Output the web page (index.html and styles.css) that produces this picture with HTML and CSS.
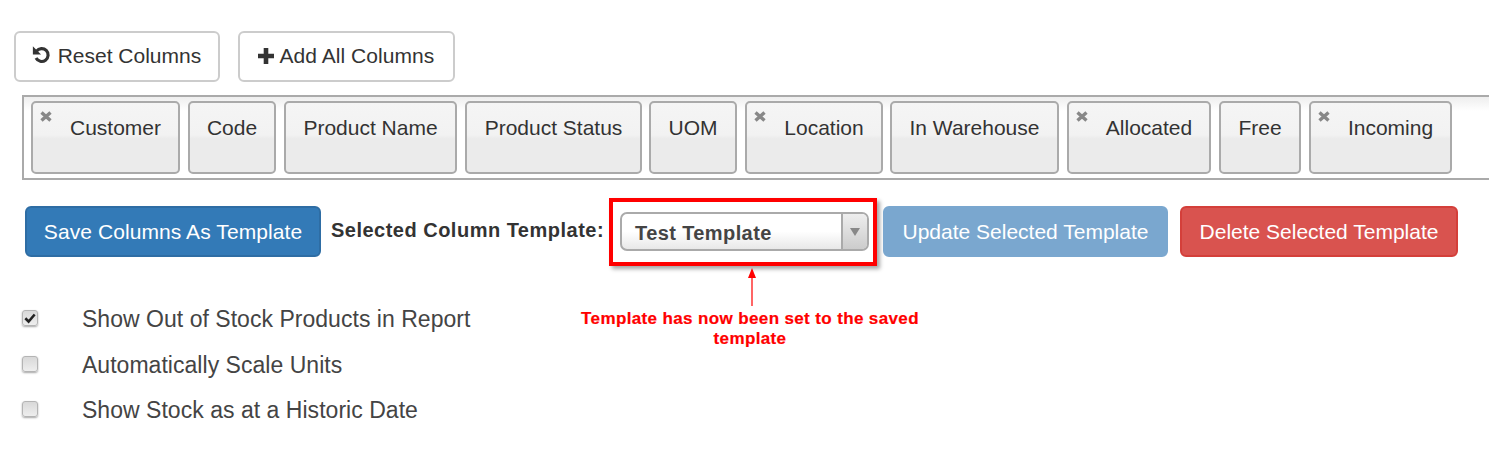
FILE: index.html
```html
<!DOCTYPE html>
<html lang="en">
<head>
<meta charset="utf-8">
<title>Columns</title>
<link rel="stylesheet" href="styles.css">
</head>
<body>
<div class="toolbar">
  <button class="btn btn-default btn-reset"><svg class="ic ic-undo" viewBox="0 0 18 18"><path d="M4.3 5.8A6.1 6.1 0 1 1 3.8 12.4" fill="none" stroke="#333" stroke-width="3"/><path d="M0.8 1.2V9H8.6Z" fill="#333"/></svg> Reset Columns</button>
  <button class="btn btn-default btn-add"><svg class="ic ic-plus" viewBox="0 0 16 16"><path d="M5.7 0H10.3V5.7H16V10.3H10.3V16H5.7V10.3H0V5.7H5.7Z" fill="#333"/></svg> Add All Columns</button>
</div>
<div class="tray">
  <div class="col w149 has-x"><svg class="x" viewBox="0 0 12 11"><path d="M1.5 1.5L10.5 9.5M10.5 1.5L1.5 9.5" stroke="#888" stroke-width="3.4"/></svg><span class="t">Customer</span></div>
  <div class="col w88"><span class="t">Code</span></div>
  <div class="col w173"><span class="t">Product Name</span></div>
  <div class="col w177"><span class="t">Product Status</span></div>
  <div class="col w88b"><span class="t">UOM</span></div>
  <div class="col w138 has-x"><svg class="x" viewBox="0 0 12 11"><path d="M1.5 1.5L10.5 9.5M10.5 1.5L1.5 9.5" stroke="#888" stroke-width="3.4"/></svg><span class="t">Location</span></div>
  <div class="col w169"><span class="t">In Warehouse</span></div>
  <div class="col w144 has-x"><svg class="x" viewBox="0 0 12 11"><path d="M1.5 1.5L10.5 9.5M10.5 1.5L1.5 9.5" stroke="#888" stroke-width="3.4"/></svg><span class="t">Allocated</span></div>
  <div class="col w82"><span class="t">Free</span></div>
  <div class="col w143 has-x"><svg class="x" viewBox="0 0 12 11"><path d="M1.5 1.5L10.5 9.5M10.5 1.5L1.5 9.5" stroke="#888" stroke-width="3.4"/></svg><span class="t">Incoming</span></div>
</div>
<div class="actions">
  <button class="btn btn-primary btn-save">Save Columns As Template</button>
  <label class="sel-label">Selected Column Template:</label>
  <div class="highlight">
    <div class="select"><span class="sel-text">Test Template</span><span class="sel-arrow"><i></i></span></div>
  </div>
  <button class="btn btn-primary btn-update">Update Selected Template</button>
  <button class="btn btn-danger btn-delete">Delete Selected Template</button>
  <div class="note">
    <svg class="note-arrow" viewBox="0 0 10 38"><path d="M5 0L9 10H5.6V38H4.4V10H1Z" fill="#f00"/></svg>
    <p>Template has now been set to the saved template</p>
  </div>
</div>
<div class="checks">
  <div class="check"><span class="box"><svg viewBox="0 0 12 12"><path d="M2 6.2L4.8 9L10 3" fill="none" stroke="#222" stroke-width="2.2"/></svg></span><span>Show Out of Stock Products in Report</span></div>
  <div class="check"><span class="box"></span><span>Automatically Scale Units</span></div>
  <div class="check"><span class="box"></span><span>Show Stock as at a Historic Date</span></div>
</div>
</body>
</html>
```
FILE: styles.css
```css
* { box-sizing: border-box; }
html, body { margin: 0; padding: 0; }
body {
  width: 1489px;
  height: 454px;
  overflow: hidden;
  background: #fff;
  font-family: "Liberation Sans", Arial, sans-serif;
  color: #333;
}
.btn {
  font-family: inherit;
  font-size: 21px;
  height: 51px;
  padding: 0;
  border-radius: 6px;
  border: 2px solid transparent;
  white-space: nowrap;
  display: block;
}
.btn-default { background: #fff; border-color: #ccc; color: #333; padding-bottom: 2px; }
.btn-primary { background: #337ab7; border-color: #2e6da4; color: #fff; letter-spacing: .08px; }
.btn-danger { background: #d9534f; border-color: #d43f3a; color: #fff; }

.toolbar { display: flex; padding: 31px 0 0 14px; gap: 18px; }
.btn-reset { width: 206px; }
.btn-add { width: 217px; letter-spacing: .04px; }
.ic { display: inline-block; vertical-align: -1px; }
.ic-undo { width: 19px; height: 19px; margin-left: -1px; margin-right: 1px; }
.ic-plus { width: 16px; height: 16px; margin-left: -1px; margin-right: 1px; }

.tray {
  display: flex;
  margin: 13px 0 0 22px;
  height: 85px;
  padding: 4px 0 4px 7px;
  border: 2px solid #aaa;
  border-right: 0;
  background: linear-gradient(#eee, #fff 14px);
}
.col {
  position: relative;
  height: 73px;
  margin-right: 8px;
  border: 2px solid #aaa;
  border-radius: 5px;
  background: linear-gradient(#f5f5f5, #f2f2f2 46%, #ebebeb 52%);
  font-size: 21px;
  text-align: center;
  padding-top: 13px;
  line-height: 24px;
  color: #333;
}
.has-x { padding-left: 20px; }
.x {
  position: absolute;
  left: 7px;
  top: 8px;
  width: 12px;
  height: 11px;
}
.w149 { width: 149px; }
.w88 { width: 88px; }
.w173 { width: 173px; }
.w177 { width: 177px; margin-right: 7px; }
.w88b { width: 88px; }
.w138 { width: 138px; margin-right: 7px; }
.w169 { width: 169px; }
.w144 { width: 144px; }
.w82 { width: 82px; }
.w143 { width: 143px; }

.actions {
  position: relative;
  display: flex;
  align-items: flex-start;
  margin-top: 18px;
  padding-left: 25px;
  height: 68px;
}
.actions > .btn { margin-top: 8px; }
.btn-save { width: 296px; }
.sel-label {
  margin-left: 10px;
  margin-top: 20px;
  font-weight: bold;
  font-size: 20px;
  line-height: 24px;
  letter-spacing: .49px;
  width: 278px;
  white-space: nowrap;
}
.highlight {
  width: 268px;
  height: 68px;
  border: 4px solid #f00;
  box-shadow: 3px 3px 4px rgba(0,0,0,.35);
  padding: 10px 4px 0 7px;
}
.select {
  display: flex;
  height: 39px;
  width: 249px;
  border: 2px solid #aaa;
  border-radius: 7px;
  background: linear-gradient(#fff 50%, #e8e8e8);
  overflow: hidden;
}
.sel-text {
  flex: 1;
  font-size: 20px;
  font-weight: bold;
  color: #444;
  padding-left: 13px;
  line-height: 38px;
  letter-spacing: .4px;
}
.sel-arrow {
  width: 26px;
  border-left: 2px solid #aaa;
  background: linear-gradient(#eee, #ccc);
  display: flex;
  align-items: center;
  justify-content: center;
}
.sel-arrow i {
  border-left: 5px solid transparent;
  border-right: 5px solid transparent;
  border-top: 8px solid #888;
}
.actions > .btn-update { width: 285px; margin-left: 6px; background: #7aa7cf; border-color: #7aa7cf; letter-spacing: 0; }
.actions > .btn-delete { width: 278px; margin-left: 12px; }
.note {
  position: absolute;
  left: 570px;
  top: 70px;
  width: 360px;
  text-align: center;
}
.note-arrow { display: block; width: 10px; height: 38px; margin-left: 177px; }
.note p {
  margin: 3px 0 0;
  font-size: 17px;
  font-weight: bold;
  line-height: 20px;
  color: #f00;
  letter-spacing: .37px;
  -webkit-text-stroke: .2px #f00;
}

.checks { margin-top: 31px; padding-left: 22px; }
.check {
  display: flex;
  align-items: center;
  height: 45.5px;
  font-size: 23px;
  letter-spacing: .03px;
  color: #444;
}
.box {
  width: 16px;
  height: 16px;
  margin-right: 44px;
  margin-top: -3px;
  border: 1px solid #b4b4b4;
  border-radius: 3px;
  background: linear-gradient(#d8d8d8, #eee);
  box-shadow: 0 1px 2px rgba(0,0,0,.35);
  display: flex;
}
.box svg { width: 14px; height: 14px; }
```
